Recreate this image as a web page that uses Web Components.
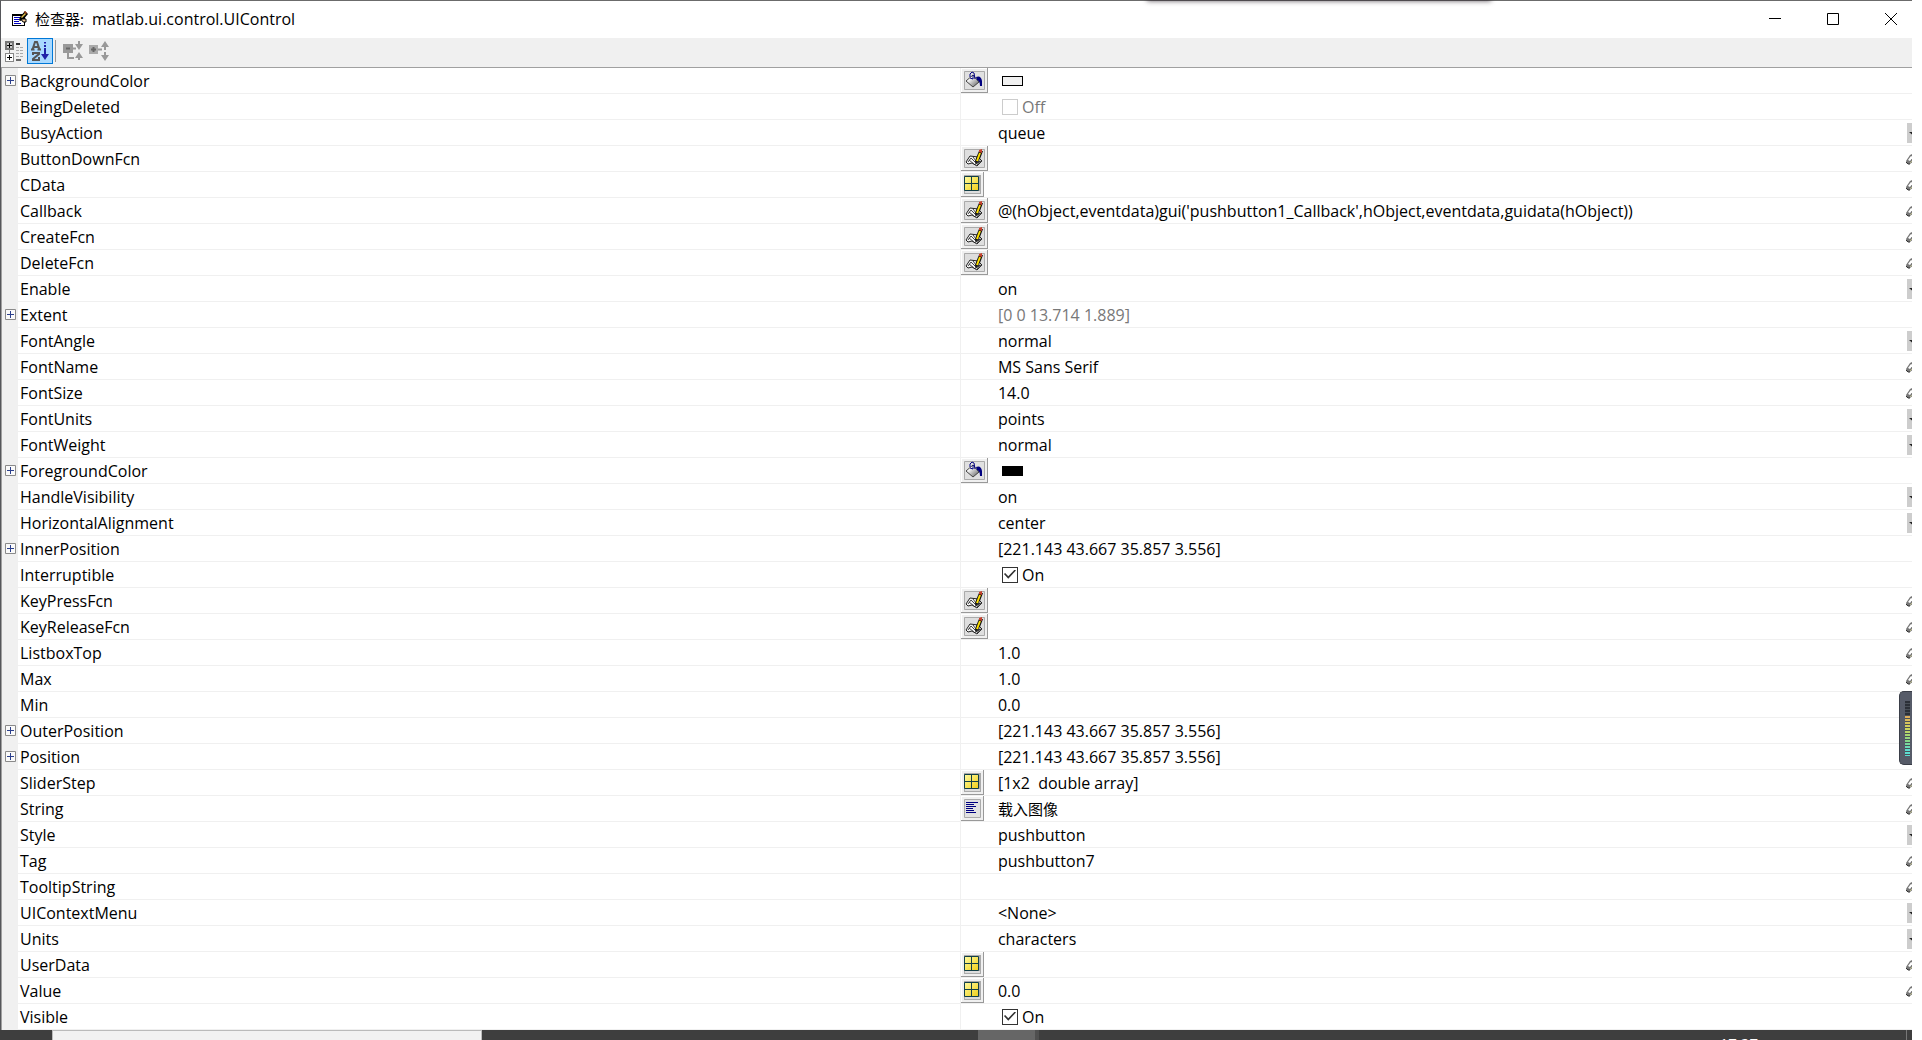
<!DOCTYPE html>
<html lang="zh-CN">
<head>
<meta charset="utf-8">
<title>检查器: matlab.ui.control.UIControl</title>
<style>
	html, body {
		height: 100%;
		margin: 0;
	}

	body {
		overflow: hidden;
		background-color: #fff;
		color: #000;
		font: 16px/20px "Open Sans", "Noto Sans CJK SC", sans-serif;
	}
</style>
</head>
<body>
<insp-desktop>
	<insp-window>
		<insp-titlebar slot="title"><span slot="app">检查器:</span>matlab.ui.control.UIControl</insp-titlebar>
		<insp-toolbar slot="toolbar"></insp-toolbar>
		<insp-grid></insp-grid>
	</insp-window>
	<insp-meter slot="overlay"></insp-meter>
	<insp-taskbar slot="taskbar">17:27</insp-taskbar>
</insp-desktop>

<script>
const line = "#f0f0f0";

const icons = {
	app: `<svg width="16" height="16" viewBox="0 0 16 16">
		<path d="M0 3h13v12H0z" fill="#000"/><path d="M1 5h11v9H1z" fill="#fff"/>
		<path d="M2 6.500h6M2 8.500h5M2 10.500h5M2 12.500h7" stroke="#0000c0"/>
		<path d="M7 9l1-3 5-6 3 3-5 6-3 1z" fill="#000"/>
		<path d="M9 6l4-4 1 1-4 4z" fill="#e8c34a"/><path d="M12 1l1-1 2 2-1 1z" fill="#a33c14"/>
		<path d="M9 8h5v3h-3z" fill="#f3cfa0" stroke="#000"/></svg>`,
	category: `<svg width="18" height="21" viewBox="0 0 18 21" shape-rendering="crispEdges">
		<path d="M0 0h9v9H0z" fill="#777"/><path d="M2 2h5v5H2z" fill="#ccc"/><path d="M2 4.500h5M4.500 2v5" stroke="#000"/>
		<path d="M4.500 9v3" stroke="#777"/>
		<path d="M0 12h9v9H0z" fill="#888"/><path d="M1 13h7v7H1z" fill="#fff"/><path d="M2 16.500h5M4.500 14v5" stroke="#000"/>
		<path d="M11 3h4" stroke="#333" stroke-width="2"/><path d="M11 19h5" stroke="#666" stroke-width="2"/>
		<path d="M11 6.500h7M11 9.500h7M11 12.500h7M11 15.500h7" stroke="#aaa" stroke-dasharray="3 1"/></svg>`,
	sort: `<svg width="18" height="20" viewBox="0 0 18 20">
		<path d="M1.500 8.500L4 1h2l2.500 7.500M2.500 6h5M0 8.500h3.500M6.500 8.500H10" fill="none" stroke="#555" stroke-width="2"/>
		<path d="M2 14v-2h6v1L2 18v1h6v-3" fill="none" stroke="#555" stroke-width="2"/>
		<path d="M14 1v1.500M14 4v2" stroke="#2121a8" stroke-width="2"/><path d="M14 7v8" stroke="#2121a8" stroke-width="2"/>
		<path d="M10 13h8l-4 6z" fill="#2121a8"/></svg>`,
	collapse: `<svg width="20" height="20" viewBox="0 0 20 20">
		<path d="M0 3h10v9H0z" fill="#999"/><path d="M3 7.500h4" stroke="#666" stroke-width="2"/>
		<path d="M10 7.500h3M5 12v5h6" fill="none" stroke="#999" stroke-width="2"/>
		<path d="M12 3h8l-4 6zM12 17h8l-4-6z" fill="#999"/><path d="M16 0v4M16 16v3" stroke="#999" stroke-width="2"/></svg>`,
	expand: `<svg width="20" height="20" viewBox="0 0 20 20">
		<path d="M0 4h9v9H0z" fill="#aaa"/><path d="M2 8.500h5M4.500 6v5" stroke="#666" stroke-width="2"/>
		<path d="M9 8.500h4" stroke="#999" stroke-width="2"/>
		<path d="M12 6h8l-4-6zM12 14h8l-4 6z" fill="#999"/><path d="M16 5v4M16 11v4" stroke="#999" stroke-width="2"/></svg>`,
	bucket: `<svg width="21" height="19" viewBox="0 0 21 19">
		<defs><linearGradient id="b" x2="1" y2="1"><stop offset=".3" stop-color="#fafafa"/><stop offset="1" stop-color="#555"/></linearGradient></defs>
		<path d="M0 0h21v19H0z" fill="#e0e0e0"/><path d="M.5.5h20v18H.5z" fill="none" stroke="#aaa"/>
		<path d="M2 10l7-6 6 7-6 5z" fill="url(#b)" stroke="#444"/>
		<path d="M12 6q5-2 6 4v5h-2q0-5-3-6z" fill="#000080"/>
		<path d="M6 6V3l2-2 2 1 1 6M6 7l3 1V4" fill="none" stroke="#000080"/></svg>`,
	func: `<svg width="21" height="19" viewBox="0 0 21 19">
		<path d="M0 0h21v19H0z" fill="#dedede"/><path d="M.5.5h20v18H.5z" fill="none" stroke="#aaa"/>
		<path d="M2 13l4-6 8 1 4 4-5 5-5-3-4 1z" fill="#f4f4f4" stroke="#222"/>
		<path d="M5 11l5 4M7 9l5 5M4 13l3-4M13 16l5-4M9 8l3 4" stroke="#444"/>
		<path d="M11 16l7-4-6-1z" fill="#333"/>
		<path d="M11 13l1-4 3-7h4l-3 8-4 4z" fill="#111"/><path d="M13 12l3-8" stroke="#ffe100" stroke-width="2"/>
		<path d="M15 1l3-1v4l-3-1z" fill="#c8402c"/></svg>`,
	matrix: `<svg width="17" height="19" viewBox="0 0 17 19">
		<defs><linearGradient id="y" x2="1" y2="1"><stop stop-color="#fffba0"/><stop offset="1" stop-color="#f0cf18"/></linearGradient></defs>
		<path d="M0 0h17v19H0z" fill="#aaa"/><path d="M1 17h15" stroke="#ddd" stroke-width="2"/>
		<path d="M.5 1.500h14v14H.5z" fill="url(#y)" stroke="#123f47"/><path d="M7.500 1v15M0 8.500h15" stroke="#123f47"/></svg>`,
	text: `<svg width="17" height="19" viewBox="0 0 17 19">
		<path d="M.5.5h16v18H.5z" fill="#e2e2e2" stroke="#aaa"/>
		<path d="M2 3.500h12M2 5.500h8M2 7.500h10M2 9.500h7M2 11.500h8M2 13.500h10" stroke="#000080"/></svg>`,
	pencil: `<svg width="16" height="12" viewBox="0 0 16 12">
		<path d="M0 8l4-6 4-2 5 1-4 6-5 4H1z" fill="#777"/><path d="M2 7l3-4 2 1-3 4z" fill="#fff"/>
		<path d="M0 9l2 2h2" fill="none" stroke="#333"/><path d="M4 10l3-3" stroke="#b5b58a"/></svg>`,
	arrow: `<svg width="16" height="20" viewBox="0 0 16 20"><path d="M0 0h16v20H0z" fill="#cdcdcd"/><path d="M2 9h9l-4 4z" fill="#222"/></svg>`,
	plus: `<svg width="11" height="11" viewBox="0 0 11 11"><path d="M.5.5h10v10H.5z" fill="#fafafa" stroke="#8a8a8a"/><path d="M2 5.500h7M5.500 2v7" stroke="#2b3f8c"/></svg>`,
	min: `<svg width="12" height="12" viewBox="0 0 12 12"><path d="M0 5.500h12" stroke="#000"/></svg>`,
	max: `<svg width="12" height="12" viewBox="0 0 12 12"><path d="M.5.5h11v11H.5z" fill="none" stroke="#000"/></svg>`,
	close: `<svg width="12" height="12" viewBox="0 0 12 12"><path d="M0 0l12 12M12 0L0 12" stroke="#000"/></svg>`
};

// [name, value, editor, icon, expandable]
const properties = [
	["BackgroundColor", "#f0f0f0", "color", "bucket", true],
	["BeingDeleted", "Off", "check"],
	["BusyAction", "queue", "list"],
	["ButtonDownFcn", "", "edit", "func"],
	["CData", "", "edit", "matrix"],
	["Callback", "@(hObject,eventdata)gui('pushbutton1_Callback',hObject,eventdata,guidata(hObject))", "edit", "func"],
	["CreateFcn", "", "edit", "func"],
	["DeleteFcn", "", "edit", "func"],
	["Enable", "on", "list"],
	["Extent", "[0 0 13.714 1.889]", "readonly", "", true],
	["FontAngle", "normal", "list"],
	["FontName", "MS Sans Serif", "edit"],
	["FontSize", "14.0", "edit"],
	["FontUnits", "points", "list"],
	["FontWeight", "normal", "list"],
	["ForegroundColor", "#000000", "color", "bucket", true],
	["HandleVisibility", "on", "list"],
	["HorizontalAlignment", "center", "list"],
	["InnerPosition", "[221.143 43.667 35.857 3.556]", "static", "", true],
	["Interruptible", "On", "check"],
	["KeyPressFcn", "", "edit", "func"],
	["KeyReleaseFcn", "", "edit", "func"],
	["ListboxTop", "1.0", "edit"],
	["Max", "1.0", "edit"],
	["Min", "0.0", "edit"],
	["OuterPosition", "[221.143 43.667 35.857 3.556]", "static", "", true],
	["Position", "[221.143 43.667 35.857 3.556]", "static", "", true],
	["SliderStep", "[1x2  double array]", "edit", "matrix"],
	["String", "载入图像", "edit", "text"],
	["Style", "pushbutton", "list"],
	["Tag", "pushbutton7", "edit"],
	["TooltipString", "", "edit"],
	["UIContextMenu", "&lt;None&gt;", "list"],
	["Units", "characters", "list"],
	["UserData", "", "edit", "matrix"],
	["Value", "0.0", "edit", "matrix"],
	["Visible", "On", "check"]
];

function attach(host, html) {
	const template = document.createElement('template');
	template.innerHTML = html;
	host.attachShadow({mode: 'open'}).append(template.content.cloneNode(true));
}

class InspIcon extends HTMLElement {
	connectedCallback() {
		if (this.shadowRoot) return;
		attach(this, /*html*/`
			<style>
				:host {
					display: block;
					flex: none;
					white-space: normal;
				}
				svg { display: block; }
			</style>
			${icons[this.getAttribute('name')]}
		`);
	}
}

class InspDesktop extends HTMLElement {
	constructor() {
		super();
		attach(this, /*html*/`
			<style>
				:host {
					display: block;
					position: relative;
					height: 100%;
					margin-right: 10px;
					overflow: hidden;
				}
				/* edge of a panel hidden above the screen */
				.shade {
					position: absolute;
					top: -10px;
					left: 60%;
					width: 18%;
					height: 10px;
					box-shadow: 0 1px 5px rgba(40, 30, 40, 0.7);
				}
				::slotted([slot="overlay"]) {
					position: absolute;
					right: 0;
					top: 691px;
				}
			</style>
			<slot></slot>
			<slot name="taskbar"></slot>
			<div class="shade"></div>
			<slot name="overlay"></slot>
		`);
	}
}

class InspWindow extends HTMLElement {
	constructor() {
		super();
		attach(this, /*html*/`
			<style>
				:host {
					display: block;
					border-top: 1px solid #6b6b6b;
					border-left: 1px solid #55565a;
					background-color: #fff;
				}
			</style>
			<slot name="title"></slot>
			<slot name="toolbar"></slot>
			<slot></slot>
		`);
	}
}

class InspTitlebar extends HTMLElement {
	constructor() {
		super();
		attach(this, /*html*/`
			<style>
				:host {
					display: flex;
					align-items: center;
					box-sizing: border-box;
					height: 37px;
					padding: 0 0 1px 11px;
				}
				h1 {
					display: flex;
					flex: 1;
					gap: 8px;
					margin: 0 0 0 7px;
					font: inherit;
				}
				::slotted(span) { font-size: 15px; }
				nav { display: flex; gap: 16px; }
				button {
					display: grid;
					place-items: center;
					width: 42px;
					height: 30px;
					padding: 0;
					border: 0;
					background: none;
				}
			</style>
			<insp-icon name="app"></insp-icon>
			<h1><slot name="app"></slot><span><slot></slot></span></h1>
			<nav>
				<button aria-label="最小化"><insp-icon name="min"></insp-icon></button>
				<button aria-label="最大化"><insp-icon name="max"></insp-icon></button>
				<button aria-label="关闭"><insp-icon name="close"></insp-icon></button>
			</nav>
		`);
	}
}

class InspToolbar extends HTMLElement {
	constructor() {
		super();
		attach(this, /*html*/`
			<style>
				:host {
					display: flex;
					align-items: flex-start;
					height: 29px;
					background-color: ${line};
					border-bottom: 1px solid #a0a0a0;
				}
				button {
					display: grid;
					place-items: center;
					box-sizing: border-box;
					width: 26px;
					height: 26px;
					padding: 0;
					border: 0;
					background: none;
				}
				button.active {
					border: 1px solid #0078d7;
					background-color: #a9d9ff;
				}
				i {
					width: 1px;
					height: 22px;
					margin: 2px 4px 0 2px;
					background-color: #999;
				}
			</style>
			<button aria-label="按类别"><insp-icon name="category"></insp-icon></button>
			<button class="active" aria-label="按字母"><insp-icon name="sort"></insp-icon></button>
			<i></i>
			<button aria-label="全部折叠"><insp-icon name="collapse"></insp-icon></button>
			<button aria-label="全部展开"><insp-icon name="expand"></insp-icon></button>
		`);
	}
}

class InspGrid extends HTMLElement {
	constructor() {
		super();
		attach(this, /*html*/`
			<style>
				:host {
					display: block;
					border-left: 1px solid #a0a0a0;
				}
				table {
					width: 100%;
					table-layout: fixed;
					border-collapse: separate;
					border-spacing: 0;
				}
				.gutter { width: 16px; }
				.name { width: 49.37%; }
				.tool { width: 37px; }
				.more { width: 6px; }
				th, td {
					box-sizing: border-box;
					height: 26px;
					padding: 0;
					border-bottom: 1px solid ${line};
					text-align: left;
					font-weight: normal;
					white-space: pre;
					overflow: hidden;
				}
				td.expand {
					background-color: ${line};
					padding-left: 3px;
				}
				th {
					padding-left: 2px;
					border-right: 1px solid ${line};
				}
				label, output { display: block; }
				button {
					display: block;
					padding: 0;
					border: 0;
					background: none;
				}
				td.tool { vertical-align: top; }
				.tool button {
					padding: 3px 2px 2px 3px;
					border: solid #999;
					border-width: 0 1px 1px 0;
					background-color: ${line};
					box-shadow: inset 1px 1px #fff;
				}
				input.text, select {
					display: block;
					box-sizing: border-box;
					width: 100%;
					height: 24px;
					padding: 0;
					border: 0;
					background: none;
					color: inherit;
					font: inherit;
					appearance: none;
				}
				input:lang(zh) { font-size: 15px; }
				.readonly { color: #787878; }
				.swatch {
					box-sizing: border-box;
					width: 21px;
					height: 10px;
					margin-left: 4px;
					border: 1px solid #000;
				}
				.check {
					display: flex;
					align-items: center;
					gap: 4px;
					margin-left: 4px;
				}
				.check input {
					display: grid;
					place-items: center;
					box-sizing: border-box;
					width: 16px;
					height: 16px;
					margin: 0;
					border: 1px solid #333;
					appearance: none;
				}
				.check input:checked::before {
					content: "";
					width: 12px;
					height: 10px;
					background-color: #333;
					clip-path: polygon(0 45%, 10% 35%, 36% 68%, 90% 0, 100% 10%, 36% 92%);
				}
				.check input:disabled { border-color: #ccc; }
				.more .arrow { margin-left: 1px; }
			</style>
			<table>
				<colgroup><col class="gutter"><col class="name"><col class="tool"><col><col class="more"></colgroup>
				<tbody></tbody>
			</table>
		`);
	}

	connectedCallback() {
		this.render();
	}

	editor(name, value, kind) {
		switch (kind) {
			case 'edit':
				return `<input class="text" type="text" id="${name}" value="${value}" lang="${/[\u4e00-\u9fff]/.test(value) ? 'zh' : 'en'}">`;
			case 'list':
				return `<select id="${name}"><option>${value}</option></select>`;
			case 'check':
				return `<div class="check"><input type="checkbox" id="${name}" ${value === 'On' ? 'checked' : 'disabled'}><label for="${name}" class="${value === 'On' ? '' : 'readonly'}">${value}</label></div>`;
			case 'color':
				return `<div class="swatch" style="background-color: ${value}"></div>`;
			default:
				return `<output id="${name}" class="${kind}">${value}</output>`;
		}
	}

	more(name, kind) {
		if (kind === 'list') return `<insp-icon class="arrow" name="arrow"></insp-icon>`;
		if (kind === 'edit') return `<button aria-label="${name}"><insp-icon name="pencil"></insp-icon></button>`;
		return '';
	}

	render() {
		this.shadowRoot.querySelector('tbody').innerHTML = properties.map(([name, value, kind, icon, expandable]) => `
			<tr>
				<td class="expand">${expandable ? `<button aria-label="${name}"><insp-icon name="plus"></insp-icon></button>` : ''}</td>
				<th scope="row">${kind === 'color' ? name : `<label for="${name}">${name}</label>`}</th>
				<td class="tool">${icon ? `<button aria-label="${name}"><insp-icon name="${icon}"></insp-icon></button>` : ''}</td>
				<td>${this.editor(name, value, kind)}</td>
				<td class="more">${this.more(name, kind)}</td>
			</tr>`).join('');
	}
}

// level meter docked to the right edge
class InspMeter extends HTMLElement {
	constructor() {
		super();
		attach(this, /*html*/`
			<style>
				:host {
					display: block;
					box-sizing: border-box;
					width: 13px;
					height: 74px;
					padding: 9px 2px 8px 5px;
					border: 1px solid #3a3e48;
					border-right: 0;
					border-radius: 5px 0 0 5px;
					background-color: #565b68;
				}
				div {
					height: 100%;
					background:
						repeating-linear-gradient(transparent 0 2px, #4a5058 2px 3px),
						linear-gradient(#2c3038 0 25%, #e0a85c 26%, #cfd65c 50%, #86d886 72%, #5cdcd0 90%);
				}
			</style>
			<div></div>
		`);
	}
}

class InspTaskbar extends HTMLElement {
	constructor() {
		super();
		attach(this, /*html*/`
			<style>
				:host {
					display: flex;
					height: 40px;
					background-color: #3e3e3e;
					color: #fff;
				}
				.search {
					box-sizing: border-box;
					width: 430px;
					margin-left: 52px;
					border: 1px solid #bbb;
					background-color: #f2f2f2;
				}
				.task {
					box-sizing: border-box;
					width: 61px;
					margin-left: 496px;
					border-right: 4px solid #4f4f4f;
					background-color: #666;
				}
				.clock {
					margin-left: auto;
					padding-top: 3px;
					font-size: 15px;
				}
				.peek {
					width: 5px;
					margin-left: 148px;
					border-left: 1px solid #777;
				}
			</style>
			<input class="search" type="text" aria-label="搜索">
			<div class="task"></div>
			<div class="clock"><slot></slot></div>
			<div class="peek"></div>
		`);
	}
}

customElements.define("insp-icon", InspIcon);
customElements.define("insp-desktop", InspDesktop);
customElements.define("insp-window", InspWindow);
customElements.define("insp-titlebar", InspTitlebar);
customElements.define("insp-toolbar", InspToolbar);
customElements.define("insp-grid", InspGrid);
customElements.define("insp-meter", InspMeter);
customElements.define("insp-taskbar", InspTaskbar);
</script>
</body>
</html>
